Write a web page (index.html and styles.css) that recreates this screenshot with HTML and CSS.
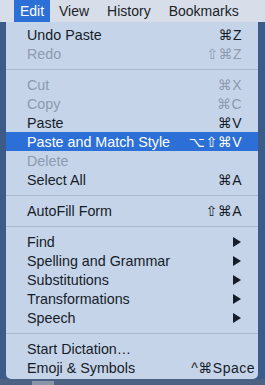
FILE: index.html
```html
<!DOCTYPE html>
<html lang="en">
<head>
<meta charset="UTF-8" />
<title>Edit menu</title>
<link rel="stylesheet" href="styles.css">
</head>
<body>

<div class="menubar">
  <div class="menubar-item active">Edit</div>
  <div class="menubar-item">View</div>
  <div class="menubar-item">History</div>
  <div class="menubar-item">Bookmarks</div>
</div>

<div class="menu-wrap">
  <div class="menu">
    <div class="item"><span class="label">Undo Paste</span><span class="keys">⌘Z</span></div>
    <div class="item disabled"><span class="label">Redo</span><span class="keys">⇧⌘Z</span></div>
    <div class="separator"></div>
    <div class="item disabled"><span class="label">Cut</span><span class="keys">⌘X</span></div>
    <div class="item disabled"><span class="label">Copy</span><span class="keys">⌘C</span></div>
    <div class="item"><span class="label">Paste</span><span class="keys">⌘V</span></div>
    <div class="item selected"><span class="label">Paste and Match Style</span><span class="keys">⌥⇧⌘V</span></div>
    <div class="item disabled"><span class="label">Delete</span></div>
    <div class="item"><span class="label">Select All</span><span class="keys">⌘A</span></div>
    <div class="separator"></div>
    <div class="item"><span class="label">AutoFill Form</span><span class="keys">⇧⌘A</span></div>
    <div class="separator"></div>
    <div class="item"><span class="label">Find</span><span class="arrow"></span></div>
    <div class="item"><span class="label">Spelling and Grammar</span><span class="arrow"></span></div>
    <div class="item"><span class="label">Substitutions</span><span class="arrow"></span></div>
    <div class="item"><span class="label">Transformations</span><span class="arrow"></span></div>
    <div class="item"><span class="label">Speech</span><span class="arrow"></span></div>
    <div class="separator"></div>
    <div class="item"><span class="label">Start Dictation…</span></div>
    <div class="item"><span class="label">Emoji &amp; Symbols</span><span class="keys wide">^⌘Space</span></div>
  </div>
</div>

<div class="desktop">
  <div class="dock-thing"></div>
</div>

</body>
</html>
```

FILE: styles.css
```css
* {
  box-sizing: border-box;
}
body, html {
  margin: 0;
  padding: 0;
  height: 100%;
  overflow: hidden;
}
body {
  background: linear-gradient(to right, #3d5b89 0, #3d5b89 6px, #c5d4e8 6px, #c5d4e8 258px, #33548a 258px);
  font-family: "Liberation Sans", Arial, sans-serif;
  font-size: 14px;
  color: #151c2a;
}
.menubar {
  display: flex;
  height: 22px;
  background: #d7dee9;
  padding-left: 14px;
}
.menubar-item {
  line-height: 22px;
  padding: 0 9px;
  color: #1b1f26;
}
.menubar-item.active {
  background: #2c6fd6;
  color: #fff;
  width: 36px;
  padding: 0;
  text-align: center;
}
.menu-wrap {
  padding: 0 7px 0 6px;
  background: #3d5b89;
}
.menu {
  background: #c5d4e8;
  border-radius: 0 0 5px 5px;
  padding: 3px 0 2px;
}
.item {
  display: flex;
  align-items: center;
  justify-content: space-between;
  height: 19px;
  padding: 0 16px 0 21px;
  font-size: 14.3px;
  white-space: nowrap;
}
.item.disabled {
  color: #8d9ab0;
}
.item.selected {
  background: #2c6fd6;
  color: #fff;
}
.keys {
  font-family: "Liberation Sans", "DejaVu Sans", sans-serif;
  font-size: 14px;
  letter-spacing: 0.5px;
}
.keys.wide {
  margin-right: -13px;
}
.arrow {
  width: 0;
  height: 0;
  margin-right: 1px;
  border-top: 5px solid transparent;
  border-bottom: 5px solid transparent;
  border-left: 8px solid #151c2a;
}
.separator {
  height: 12px;
  display: flex;
  align-items: center;
}
.separator::before {
  content: "";
  display: block;
  width: 100%;
  height: 1px;
  background: #a9b8cd;
}
.desktop {
  height: 20px;
  background: #4b6285;
  position: relative;
}
.dock-thing {
  position: absolute;
  left: 32px;
  top: 2px;
  width: 22px;
  height: 18px;
  background: #8a96a8;
}
```
